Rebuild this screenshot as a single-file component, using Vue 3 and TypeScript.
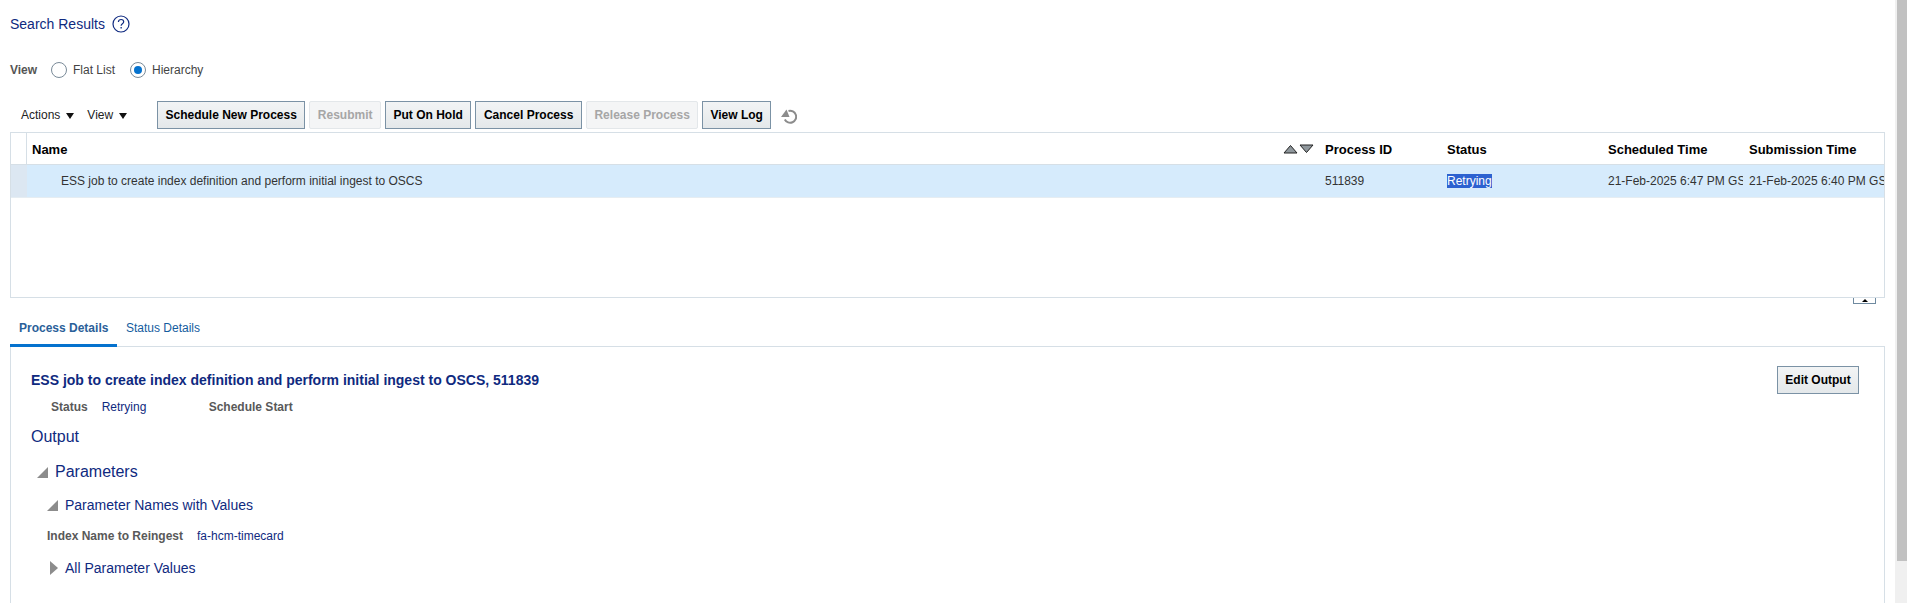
<script setup lang="ts">
interface Btn { label: string; disabled?: boolean; width: number }
const buttons: Btn[] = [
  { label: 'Schedule New Process', width: 148 },
  { label: 'Resubmit', disabled: true, width: 72 },
  { label: 'Put On Hold', width: 86 },
  { label: 'Cancel Process', width: 107 },
  { label: 'Release Process', disabled: true, width: 112 },
  { label: 'View Log', width: 69 },
]
</script>

<template>
  <div class="page">
    <main class="main">
      <div class="title-row">
        <span class="title">Search Results</span>
        <svg class="help" width="18" height="18" viewBox="0 0 18 18">
          <circle cx="9" cy="9" r="8" fill="none" stroke="#0f2a80" stroke-width="1.2" />
          <path d="M6.4 7c0-1.6 1.2-2.5 2.7-2.5S11.7 5.400 11.700 6.800c0 1.900-2.600 2-2.600 4" fill="none" stroke="#0f2a80" stroke-width="1.200" />
          <rect x="8.500" y="12" width="1.300" height="1.500" fill="#0f2a80" />
        </svg>
      </div>

      <div class="view-row">
        <span class="view-label">View</span>
        <span class="radio"></span>
        <span class="radio-text flat">Flat List</span>
        <span class="radio on"><i></i></span>
        <span class="radio-text">Hierarchy</span>
      </div>

      <div class="toolbar">
        <span class="menu actions">Actions<b class="caret"></b></span>
        <span class="menu view">View<b class="caret"></b></span>
        <div class="buttons">
          <button
            v-for="b in buttons"
            :key="b.label"
            class="btn"
            :class="{ disabled: b.disabled }"
            :style="{ width: b.width + 'px' }"
          >{{ b.label }}</button>
        </div>
        <svg class="refresh" width="18" height="18" viewBox="0 0 18 18">
          <path d="M9.500 4A6 6 0 1 1 5.800 12.500" fill="none" stroke="#8c8c8c" stroke-width="2" />
          <path d="M7.500 2.500 2 10h8.500z" fill="#8c8c8c" />
        </svg>
      </div>

      <section class="table">
        <div class="grid head">
          <div class="gutter"></div>
          <div class="cell name-head">
            <span>Name</span>
            <span class="sort">
              <svg width="15" height="10" viewBox="0 0 15 10"><path d="M1 9 7.500 1.500 14 9z" fill="#8f979c" stroke="#222" stroke-width="1" /></svg>
              <svg width="15" height="10" viewBox="0 0 15 10"><path d="M1 1h13L7.500 8.500z" fill="#8f979c" stroke="#222" stroke-width="1" /></svg>
            </span>
          </div>
          <div class="cell">Process ID</div>
          <div class="cell">Status</div>
          <div class="cell">Scheduled Time</div>
          <div class="cell">Submission Time</div>
        </div>
        <div class="grid row">
          <div class="gutter"></div>
          <div class="cell job">ESS job to create index definition and perform initial ingest to OSCS</div>
          <div class="cell">511839</div>
          <div class="cell"><span class="selected">Retrying</span></div>
          <div class="cell">21-Feb-2025 6:47 PM GST</div>
          <div class="cell">21-Feb-2025 6:40 PM GST</div>
        </div>
      </section>

      <div class="splitter-row">
        <span class="splitter"><b></b></span>
      </div>

      <nav class="tabs">
        <span class="tab active">Process Details</span>
        <span class="tab">Status Details</span>
      </nav>

      <section class="panel">
        <div class="panel-top">
          <h2 class="job-title">ESS job to create index definition and perform initial ingest to OSCS, 511839</h2>
          <button class="btn edit">Edit Output</button>
        </div>
        <div class="status-row">
          <span class="lbl">Status</span>
          <span class="val retry">Retrying</span>
          <span class="lbl">Schedule Start</span>
        </div>
        <div class="output">Output</div>
        <div class="disclosure params">
          <svg width="12" height="12" viewBox="0 0 12 12"><path d="M0 12 11 1v11z" fill="#8c8c8c" /></svg>
          <span>Parameters</span>
        </div>
        <div class="disclosure names">
          <svg width="12" height="12" viewBox="0 0 12 12"><path d="M0 12 11 1v11z" fill="#8c8c8c" /></svg>
          <span>Parameter Names with Values</span>
        </div>
        <div class="index-row">
          <span class="lbl">Index Name to Reingest</span>
          <span class="val">fa-hcm-timecard</span>
        </div>
        <div class="disclosure all">
          <svg width="9" height="14" viewBox="0 0 9 14"><path d="M0 0l8 7-8 7z" fill="#8c8c8c" /></svg>
          <span>All Parameter Values</span>
        </div>
      </section>
    </main>
    <aside class="scrollbar"><div class="thumb"></div></aside>
  </div>
</template>

<style>
html, body { margin: 0; overflow: hidden; background: #fff; }
</style>

<style scoped>
.page {
  display: flex;
  width: 1907px;
  height: 603px;
  overflow: hidden;
  font-family: "Liberation Sans", Arial, sans-serif;
  font-size: 12px;
  color: #333;
  background: #fff;
}
.main {
  width: 1885px;
  padding: 0 0 0 10px;
  box-sizing: border-box;
  flex: none;
}
.scrollbar {
  margin-left: 10px;
  width: 12px;
  height: 603px;
  background: #f0f0f0;
  flex: none;
  display: flex;
  justify-content: flex-end;
}
.thumb { width: 10px; height: 561px; background: #c1c1c1; }

.title-row { display: flex; align-items: center; height: 18px; padding-top: 15px; }
.title { font-size: 14px; color: #0f2a80; }
.help { margin-left: 7px; }

.view-row { display: flex; align-items: center; height: 18px; margin-top: 28px; }
.view-label { font-weight: bold; color: #555; width: 41px; }
.radio {
  width: 14px; height: 14px; border: 1px solid #7a8b99; border-radius: 50%;
  display: flex; align-items: center; justify-content: center; background: #fff;
}
.radio i { width: 8px; height: 8px; border-radius: 50%; background: #0572ce; }
.radio-text { margin-left: 6px; color: #444; }
.flat { width: 57px; }

.toolbar { display: flex; align-items: center; height: 28px; margin-top: 22px; }
.menu { display: flex; align-items: center; color: #222; }
.actions { margin-left: 11px; }
.view { margin-left: 13px; }
.caret {
  width: 0; height: 0; margin-left: 6px; margin-top: 2px;
  border-left: 4.500px solid transparent; border-right: 4.500px solid transparent;
  border-top: 6px solid #111;
}
.buttons { display: flex; gap: 4px; margin-left: 30px; }
.btn {
  height: 28px; box-sizing: border-box; padding: 0;
  font: bold 12px "Liberation Sans", Arial, sans-serif;
  color: #000;
  border: 1px solid #7b92a5;
  background: linear-gradient(#f2f4f5, #e4e8ea);
  white-space: nowrap;
}
.btn.disabled {
  color: #a6a6a6; background: #f4f5f6; border-color: #e3e7ea; border-radius: 2px;
}
.refresh { margin-left: 8px; margin-top: 2px; }

.table {
  width: 1875px; height: 166px; margin-top: 3px; box-sizing: border-box;
  border: 1px solid #d6dfe6;
}
.grid {
  display: grid;
  grid-template-columns: 16px 1292px 122px 161px 141px 1fr;
  align-items: center;
}
.head { height: 32px; font-weight: bold; font-size: 13px; color: #000; border-bottom: 1px solid #d6dfe6; box-sizing: border-box; padding-bottom: 1px; }
.head .gutter { height: 32px; border-right: 1px solid #d6dfe6; box-sizing: border-box; }
.cell { padding-left: 6px; white-space: nowrap; overflow: hidden; box-sizing: border-box; }
.head .cell:nth-child(2) { padding-left: 5px; }
.name-head { display: flex; justify-content: space-between; align-items: center; padding-right: 5px; }
.sort { display: flex; gap: 1px; }
.sort svg { display: block; }
.row { height: 32px; background: #d6ebfc; color: #333; border-bottom: 1px solid #e6edf2; box-sizing: content-box; }
.row .gutter { height: 32px; background: #dce7f2; }
.row .job { padding-left: 34px; }
.selected { background: #2d62d0; color: #fff; }

.splitter-row { display: flex; justify-content: flex-end; width: 1875px; height: 6px; padding-right: 9px; box-sizing: border-box; }
.splitter {
  width: 23px; height: 6px; box-sizing: border-box;
  border: 1px solid #6f8aa0; border-top: 0; background: #fff;
  display: flex; justify-content: center; align-items: center;
}
.splitter b { width: 0; height: 0; border-left: 3px solid transparent; border-right: 3px solid transparent; border-bottom: 3px solid #000; }

.tabs {
  display: flex; width: 1875px; height: 43px; box-sizing: border-box;
  border-bottom: 1px solid #d6dfe6; margin-top: 0; padding-top: 14px;
}
.tab { padding: 0 9px; height: 28px; line-height: 20px; color: #145c9e; white-space: nowrap; box-sizing: content-box; }
.tab.active { font-weight: bold; border-bottom: 3px solid #0572ce; width: 98px; padding: 0 0 0 9px; color: #2a6099; height: 26px; }

.panel {
  width: 1875px; height: 260px; box-sizing: border-box;
  border: 1px solid #d6dfe6; border-bottom: 0; border-top: 0;
  padding: 19px 25px 0 20px;
}
.panel-top { display: flex; justify-content: space-between; align-items: flex-start; height: 28px; }
.job-title { margin: 6px 0 0; font-size: 14px; font-weight: bold; color: #0f2a80; }
.edit { width: 82px; }

.status-row { display: flex; margin-top: 5px; height: 16px; line-height: 16px; padding-left: 20px; }
.lbl { font-weight: bold; color: #595959; }
.val { color: #0f2a80; }
.retry { margin-left: 14px; width: 107px; }

.output { font-size: 16px; color: #0f2a80; margin-top: 12px; height: 20px; line-height: 20px; }
.disclosure { display: flex; align-items: center; color: #0f2a80; }
.disclosure svg { flex: none; }
.params { margin-top: 15px; font-size: 16px; height: 20px; padding-left: 6px; gap: 6px; }
.names { margin-top: 13px; font-size: 14px; height: 20px; padding-left: 16px; gap: 6px; }
.index-row { margin-top: 13px; height: 16px; line-height: 16px; padding-left: 16px; display: flex; gap: 14px; }
.all { margin-top: 14px; font-size: 14px; height: 20px; padding-left: 19px; gap: 6px; }
</style>
